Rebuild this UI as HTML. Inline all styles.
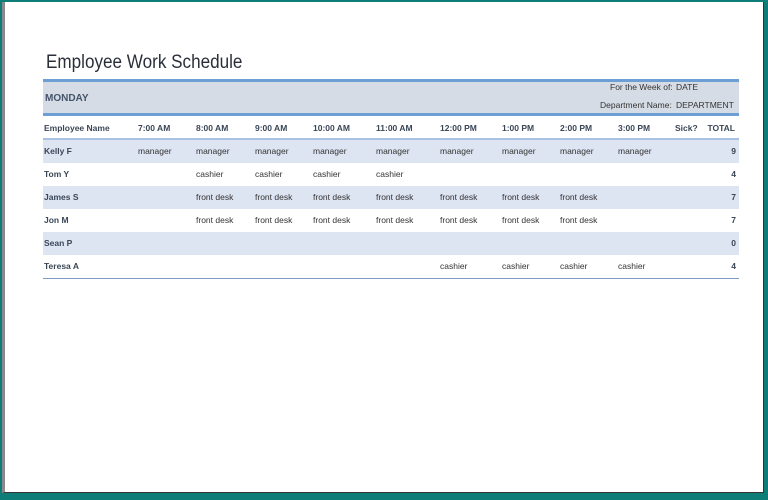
<!DOCTYPE html><html><head><style>
html,body{margin:0;padding:0}
body{width:768px;height:500px;background:#0f7d77;position:relative;overflow:hidden;font-family:"Liberation Sans",sans-serif}
.page{position:absolute;left:2px;top:2px;width:758px;height:490px;background:#fff;border-left:3px solid #8a8a8a;border-right:1px solid #333;border-bottom:1px solid #333}
.t{position:absolute;font-size:8.5px;color:#333;white-space:nowrap}
.b{font-weight:bold;color:#3a4656}
h1{position:absolute;left:46px;top:52px;margin:0;font-size:19px;font-weight:normal;color:#2a2f3a;transform:scaleX(0.9);transform-origin:0 0}
.band{position:absolute;left:43px;width:696px}
</style></head><body>
<div class="page"></div>
<h1>Employee Work Schedule</h1>
<div class="band" style="top:79px;height:3px;background:#6d9fd5"></div>
<div class="band" style="top:82px;height:31px;background:#d6dce5"></div>
<div class="band" style="top:113px;height:3px;background:#6d9fd5"></div>
<div class="t b" style="left:45px;top:93px;font-size:10px;color:#44546a">MONDAY</div>
<div class="t" style="left:610px;top:82px">For the Week of:</div>
<div class="t" style="left:676px;top:82px">DATE</div>
<div class="t" style="left:600px;top:100px">Department Name:</div>
<div class="t" style="left:676px;top:100px">DEPARTMENT</div>
<div class="band" style="top:138px;height:2px;background:#a9c2e4"></div>
<div class="band" style="top:140px;height:23px;background:#dde4f2"></div>
<div class="band" style="top:186px;height:23px;background:#dde4f2"></div>
<div class="band" style="top:232px;height:23px;background:#dde4f2"></div>
<div class="band" style="top:278px;height:1px;background:#7f9bc4"></div>
<div id="g"></div>
<script>
var xs=[44,138,196,255,313,376,440,502,560,618,675];
var hdr=["Employee Name","7:00 AM","8:00 AM","9:00 AM","10:00 AM","11:00 AM","12:00 PM","1:00 PM","2:00 PM","3:00 PM","Sick?"];
var rows=[["Kelly F","manager","manager","manager","manager","manager","manager","manager","manager","manager","","9"],
["Tom Y","","cashier","cashier","cashier","cashier","","","","","","4"],
["James S","","front desk","front desk","front desk","front desk","front desk","front desk","front desk","","","7"],
["Jon M","","front desk","front desk","front desk","front desk","front desk","front desk","front desk","","","7"],
["Sean P","","","","","","","","","","","0"],
["Teresa A","","","","","","cashier","cashier","cashier","cashier","","4"]];
var h="";
hdr.forEach(function(s,i){h+='<div class="t b" style="left:'+xs[i]+'px;top:123px">'+s+'</div>';});
h+='<div class="t b" style="right:33px;top:123px">TOTAL</div>';
rows.forEach(function(r,j){var y=146+23*j;
for(var i=0;i<11;i++){if(r[i])h+='<div class="t'+(i==0?' b':'')+'" style="left:'+xs[i]+'px;top:'+y+'px">'+r[i]+'</div>';}
h+='<div class="t b" style="right:32px;top:'+y+'px">'+r[11]+'</div>';});
document.getElementById('g').innerHTML=h;
</script>
</body></html>
